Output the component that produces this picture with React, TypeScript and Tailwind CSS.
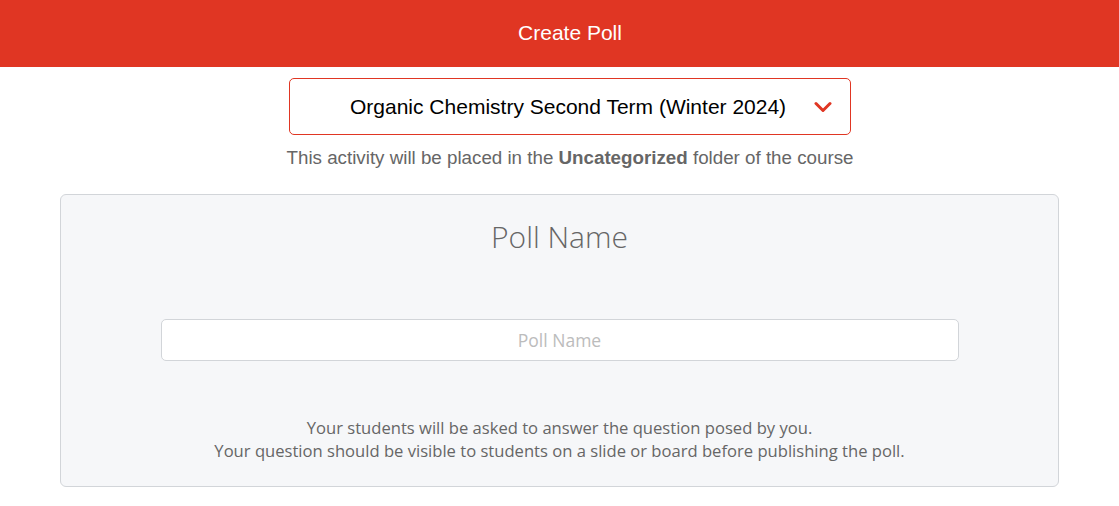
const ChevronDown = () => (
  <svg width="18" height="12" viewBox="0 0 18 12" className="shrink-0">
    <polyline
      points="2,2.5 9,9.5 16,2.5"
      fill="none"
      stroke="#e03623"
      strokeWidth="3"
      strokeLinecap="round"
      strokeLinejoin="round"
    />
  </svg>
);

const App = () => {
  return (
    <div className="min-h-screen bg-white font-['Liberation_Sans',Arial,sans-serif]">
      <header className="h-[67px] bg-[#e03623] flex items-center justify-center pl-[21px] pb-[2px]">
        <h1 className="text-white text-[21px] leading-none">Create Poll</h1>
      </header>

      <div className="flex flex-col items-center pt-[11px] pl-[21px]">
        <button className="w-[562px] h-[57px] border border-[#e03623] rounded-[5px] bg-white flex items-center pl-[60px] pr-[18px]">
          <span className="flex-1 text-left text-[21px] text-black">
            Organic Chemistry Second Term (Winter 2024)
          </span>
          <ChevronDown />
        </button>
        <p className="mt-[12px] text-[18.75px] leading-[22px] text-[#666]">
          This activity will be placed in the <span className="font-bold">Uncategorized</span> folder of the course
        </p>
      </div>

      <div className="px-[60px] mt-[25px]">
        <section className="w-[999px] h-[293px] bg-[#f6f7f9] border border-[#d2d5d9] rounded-[6px] flex flex-col items-center font-['Open_Sans','Noto_Sans',sans-serif] text-[#666]">
          <h2 className="mt-[22px] text-[30px] leading-[40px] font-light text-[#666]">Poll Name</h2>
          <input
            type="text"
            placeholder="Poll Name"
            className="mt-[62px] w-[798px] h-[42px] bg-white border border-[#d2d5d9] rounded-[5px] text-center text-[17.5px] placeholder:text-[#bcbcbc] outline-none"
          />
          <div className="mt-[55px] text-center text-[16.6px] leading-[23px]">
            <p>Your students will be asked to answer the question posed by you.</p>
            <p>Your question should be visible to students on a slide or board before publishing the poll.</p>
          </div>
        </section>
      </div>
    </div>
  );
};

export default App;
